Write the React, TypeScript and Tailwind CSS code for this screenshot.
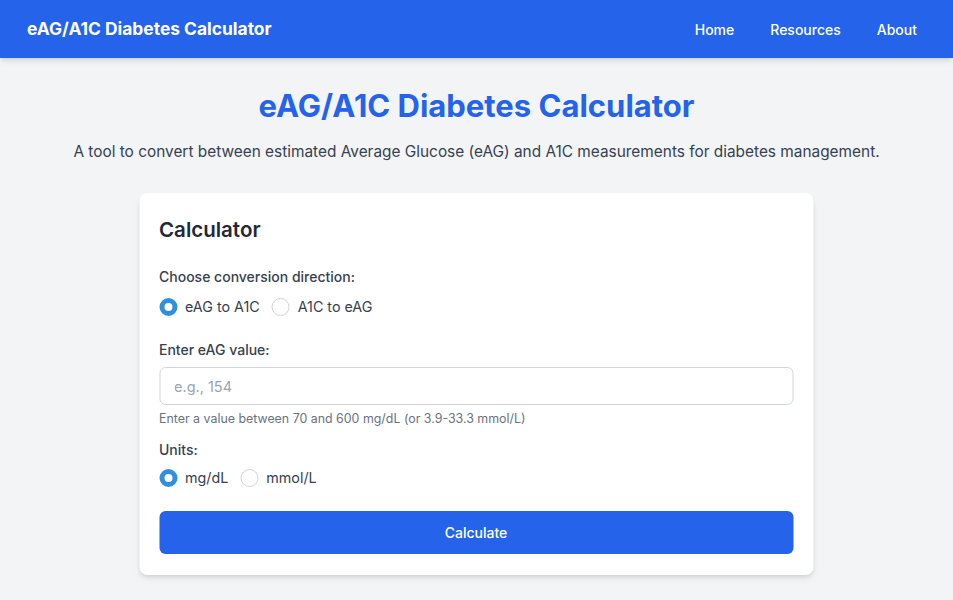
import React from "react";

function Radio({ checked, label }: { checked: boolean; label: string }) {
  return (
    <label className="flex items-center gap-2 mr-3">
      <span
        className={
          checked
            ? "w-[18px] h-[18px] rounded-full border-[5px] border-[#2f8fe0] bg-white"
            : "w-[18px] h-[18px] rounded-full border border-[#d1d5db] bg-white"
        }
      />
      <span className="text-[14.3px] text-[#374151]">{label}</span>
    </label>
  );
}

export default function App() {
  return (
    <div className="min-h-[600px] bg-[#f3f4f6]" style={{ fontFamily: "Inter, 'Noto Sans', sans-serif" }}>
      <header className="bg-[#2563eb] h-[58px] shadow-md flex items-center justify-between px-6">
        <div className="text-white font-bold text-[17.4px] pl-[3px]">eAG/A1C Diabetes Calculator</div>
        <nav className="flex gap-3 text-white text-[14px] font-medium">
          <a className="px-3">Home</a>
          <a className="px-3">Resources</a>
          <a className="px-3">About</a>
        </nav>
      </header>
      <main className="flex flex-col items-center pt-[30px]">
        <h1 className="text-[31px] leading-9 font-bold text-[#2563eb] mb-4">eAG/A1C Diabetes Calculator</h1>
        <p className="text-[15.4px] leading-6 text-[#374151] mb-[29px]">
          A tool to convert between estimated Average Glucose (eAG) and A1C measurements for diabetes management.
        </p>
        <div className="w-[674px] -translate-x-[0.5px] bg-white rounded-lg shadow-md px-5 pt-[23px] pb-[21px]">
          <h2 className="text-[20.5px] leading-7 font-semibold text-[#1f2937] mb-[23px]">Calculator</h2>
          <div className="text-sm text-[#374151] font-medium leading-5 mb-2">Choose conversion direction:</div>
          <div className="flex items-center h-6 mb-[21px]">
            <Radio checked label="eAG to A1C" />
            <Radio checked={false} label="A1C to eAG" />
          </div>
          <div className="text-sm text-[#374151] font-medium leading-5 mb-[7px]">Enter eAG value:</div>
          <input
            className="w-full h-[38px] border border-[#d1d5db] rounded-md px-[14px] text-[14.5px] placeholder:text-[#9ca3af] outline-none"
            placeholder="e.g., 154"
          />
          <div className="text-[12.4px] text-[#6b7280] mt-[6px] leading-4 mb-[13px]">
            Enter a value between 70 and 600 mg/dL (or 3.9-33.3 mmol/L)
          </div>
          <div className="text-sm text-[#374151] font-medium leading-5 mb-[6px]">Units:</div>
          <div className="flex items-center h-6 mb-[21px]">
            <Radio checked label="mg/dL" />
            <Radio checked={false} label="mmol/L" />
          </div>
          <button className="w-full h-[43px] bg-[#2563eb] text-white rounded-md text-sm font-medium">
            Calculate
          </button>
        </div>
      </main>
    </div>
  );
}
